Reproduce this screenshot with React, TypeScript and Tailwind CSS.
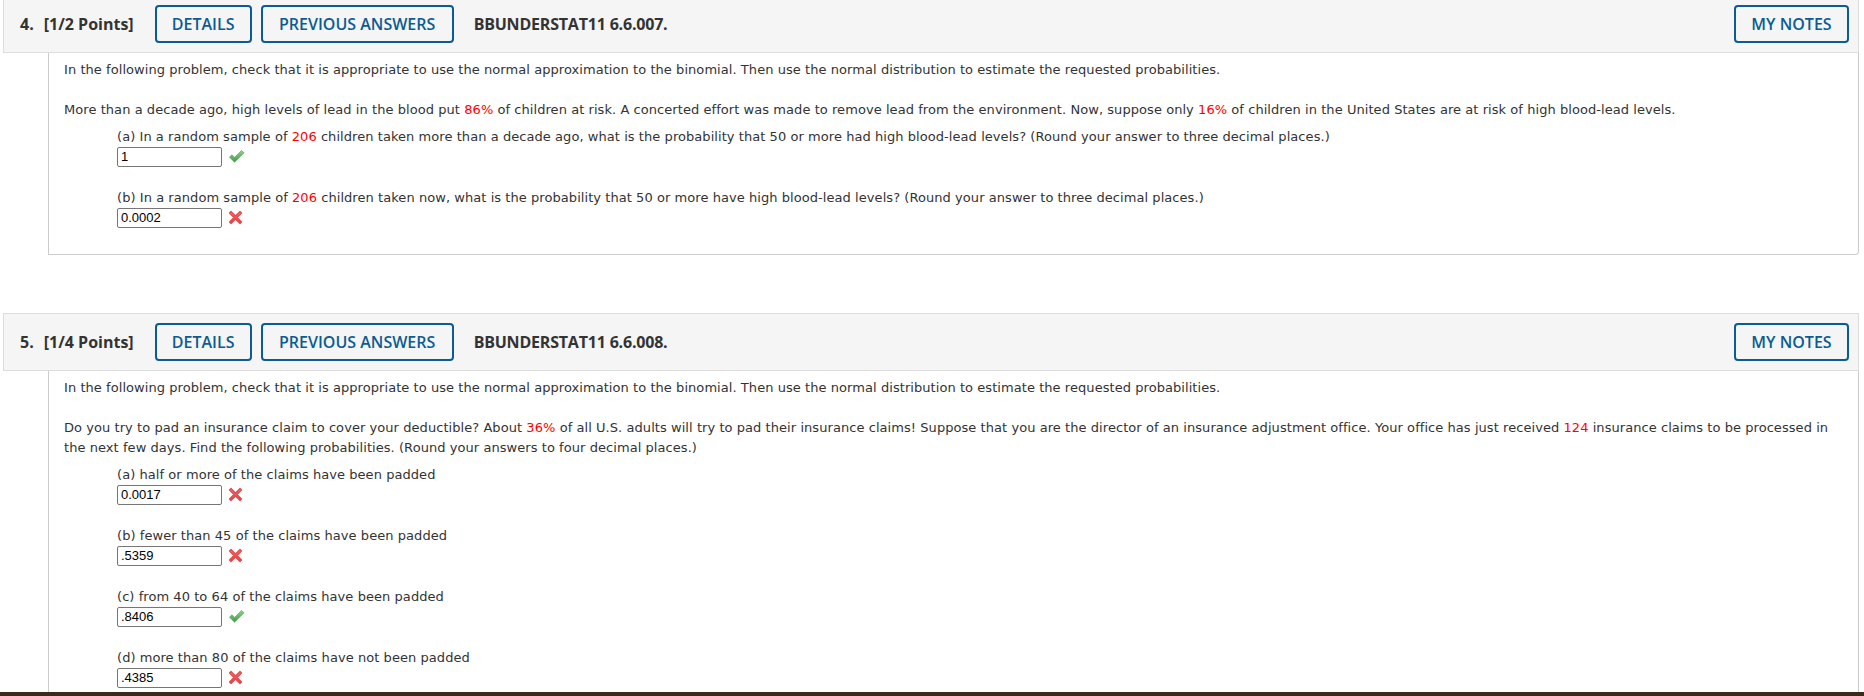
import React from "react";

const R = ({ children }: { children: React.ReactNode }) => (
  <span className="text-[#ff0000]">{children}</span>
);

const Check = () => (
  <svg width="17" height="15" viewBox="0 0 17 15" className="ml-[6px] mt-[2px]">
    <defs>
      <linearGradient id="gk" x1="0" y1="0" x2="0" y2="1">
        <stop offset="0" stopColor="#8fd48a" />
        <stop offset="1" stopColor="#3f9a45" />
      </linearGradient>
    </defs>
    <path
      d="M1.5 8.2 L4 5.8 L6.6 8.4 L13.6 1.4 L16 3.8 L6.6 13.2 Z"
      fill="url(#gk)"
      stroke="#4a9a4c"
      strokeWidth="0.6"
      strokeLinejoin="round"
    />
  </svg>
);

const Cross = () => (
  <svg width="15" height="15" viewBox="0 0 15 15" className="ml-[6px] mt-[2px]">
    <defs>
      <linearGradient id="gx" x1="0" y1="0" x2="0" y2="1">
        <stop offset="0" stopColor="#ff7a7a" />
        <stop offset="1" stopColor="#e23a3f" />
      </linearGradient>
    </defs>
    <path
      d="M3 1.5 L7.5 6 L12 1.5 L13.5 3 L9 7.5 L13.5 12 L12 13.5 L7.5 9 L3 13.5 L1.5 12 L6 7.5 L1.5 3 Z"
      fill="url(#gx)"
      stroke="#e0474b"
      strokeWidth="1.2"
      strokeLinejoin="round"
    />
  </svg>
);

interface QuestionProps {
  label: React.ReactNode;
  value: string;
  ok: boolean;
  first?: boolean;
}

const Question = ({ label, value, ok, first }: QuestionProps) => (
  <div className={first ? "mt-[7px]" : "mt-[21px]"}>
    <div className="leading-5">{label}</div>
    <div className="flex items-start">
      <div className="w-[105px] h-[20px] border border-[#767676] rounded-[2px] pl-[3px] text-[13px] leading-[18px] tracking-normal text-black font-['Liberation_Sans',Arial,sans-serif]">
        {value}
      </div>
      {ok ? <Check /> : <Cross />}
    </div>
  </div>
);

const Btn = ({ children, w }: { children: React.ReactNode; w: string }) => (
  <div
    className={`${w} h-[38px] flex items-center justify-center border-2 border-[#0b5c92] rounded-[4px] text-[#0b5c92] text-[16px] font-semibold`}
  >
    {children}
  </div>
);

const Header = ({ num, points, code }: { num: string; points: string; code: string }) => (
  <div className="h-[58px] bg-[#f5f5f5] border border-[#dddddd] flex items-center pl-[16px] pr-[9px] text-[#333] tracking-normal font-['Open_Sans',sans-serif]">
    <span className="text-[16px] font-bold">{num}</span>
    <span className="text-[16px] font-bold ml-[10px]">{points}</span>
    <div className="ml-[21px] flex gap-[9px]">
      <Btn w="w-[97px]">DETAILS</Btn>
      <Btn w="w-[193px]">PREVIOUS ANSWERS</Btn>
    </div>
    <span className="ml-[20px] text-[16px] font-bold tracking-[-0.2px]">{code}</span>
    <div className="ml-auto">
      <Btn w="w-[115px]">MY NOTES</Btn>
    </div>
  </div>
);

export default function App() {
  return (
    <div className="w-[1864px] h-[696px] bg-white flex flex-col overflow-hidden font-['DejaVu_Sans',Verdana,sans-serif] text-[13px] tracking-[0.06px] text-[#333]">
      <div className="h-[692px] overflow-hidden">
        <div className="-mt-[5px] ml-[3px] mr-[5px]">
          {/* question 4 */}
          <Header num="4." points="[1/2 Points]" code="BBUNDERSTAT11 6.6.007." />
          <div className="ml-[45px] border-l border-r border-b border-[#cccccc] rounded-br-[4px] pl-[15px] pr-[15px] pt-[7px] pb-[26px]">
            <p className="leading-5">
              In the following problem, check that it is appropriate to use the normal approximation to the
              binomial. Then use the normal distribution to estimate the requested probabilities.
            </p>
            <p className="leading-5 mt-[20px]">
              More than a decade ago, high levels of lead in the blood put <R>86%</R> of children at risk. A
              concerted effort was made to remove lead from the environment. Now, suppose only <R>16%</R> of
              children in the United States are at risk of high blood-lead levels.
            </p>
            <div className="pl-[53px]">
              <Question
                first
                label={
                  <>
                    (a) In a random sample of <R>206</R> children taken more than a decade ago, what is the
                    probability that 50 or more had high blood-lead levels? (Round your answer to three decimal
                    places.)
                  </>
                }
                value="1"
                ok
              />
              <Question
                label={
                  <>
                    (b) In a random sample of <R>206</R> children taken now, what is the probability that 50 or
                    more have high blood-lead levels? (Round your answer to three decimal places.)
                  </>
                }
                value="0.0002"
                ok={false}
              />
            </div>
          </div>

          {/* question 5 */}
          <div className="mt-[58px]">
            <Header num="5." points="[1/4 Points]" code="BBUNDERSTAT11 6.6.008." />
            <div className="ml-[45px] border-l border-r border-[#cccccc] pl-[15px] pr-[15px] pt-[7px] pb-[40px]">
              <p className="leading-5">
                In the following problem, check that it is appropriate to use the normal approximation to the
                binomial. Then use the normal distribution to estimate the requested probabilities.
              </p>
              <p className="leading-5 mt-[20px]">
                Do you try to pad an insurance claim to cover your deductible? About <R>36%</R> of all U.S.
                adults will try to pad their insurance claims! Suppose that you are the director of an insurance
                adjustment office. Your office has just received <R>124</R> insurance claims to be processed in
                the next few days. Find the following probabilities. (Round your answers to four decimal places.)
              </p>
              <div className="pl-[53px]">
                <Question first label="(a) half or more of the claims have been padded" value="0.0017" ok={false} />
                <Question label="(b) fewer than 45 of the claims have been padded" value=".5359" ok={false} />
                <Question label="(c) from 40 to 64 of the claims have been padded" value=".8406" ok />
                <Question label="(d) more than 80 of the claims have not been padded" value=".4385" ok={false} />
              </div>
            </div>
          </div>
        </div>
      </div>
      <div className="h-[4px] bg-[#3b2a1c]" />
    </div>
  );
}
